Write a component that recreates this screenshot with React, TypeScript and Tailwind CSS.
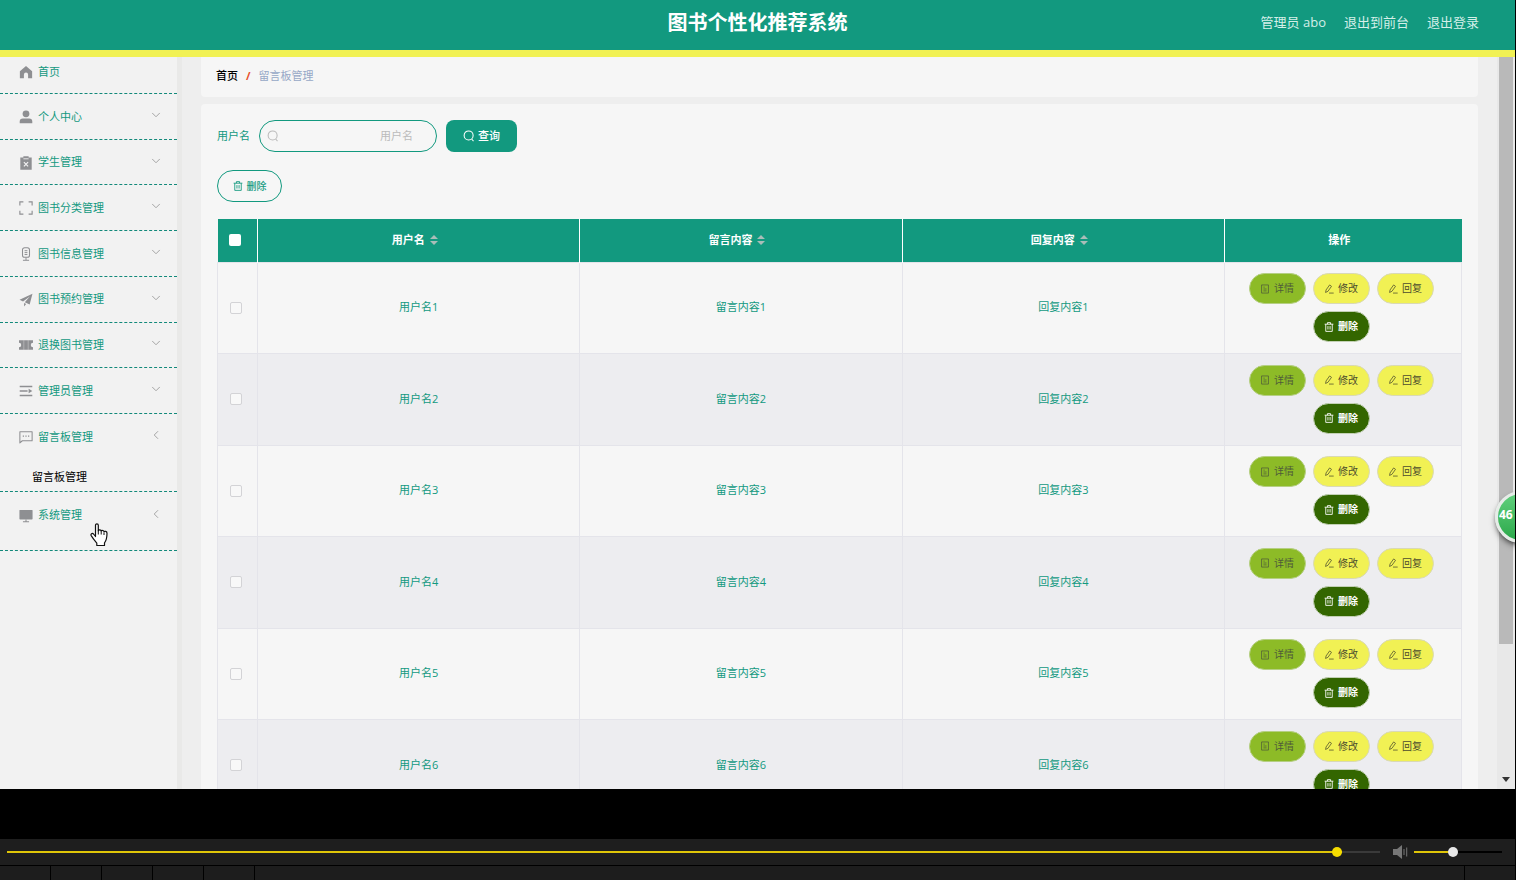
import { useState } from "react";
import type { ReactNode } from "react";
import { ChevronDown, ChevronLeft } from "lucide-react";

type IconProps = {
  children: ReactNode;
  className?: string;
};

type MenuEntry = {
  label: string;
  icon: ReactNode;
};

const Icon = ({ children, className = "size-3.5" }: IconProps) => (
  <svg viewBox="0 0 16 16" className={`shrink-0 ${className}`} fill="none" stroke="currentColor" aria-hidden="true">
    {children}
  </svg>
);

/* Menu icons */
const HomeIcon = (
  <Icon>
    <path d="M8 1 1 7.2V15h4.6v-4a2.4 2.4 0 0 1 4.8 0v4H15V7.2z" fill="currentColor" stroke="none" />
  </Icon>
);

const UserIcon = (
  <Icon>
    <circle cx="8" cy="4.4" r="3.9" fill="currentColor" stroke="none" />
    <path d="M.8 15.2v-2A3.6 3.6 0 0 1 4.4 9.6h7.2a3.6 3.6 0 0 1 3.6 3.6v2z" fill="currentColor" stroke="none" />
  </Icon>
);

const ReleaseIcon = (
  <Icon>
    <path d="M1.500 1.600H5V.4h6v1.200h3.500v14h-13z" fill="currentColor" stroke="none" />
    <path d="M5 3.200h6" stroke="#f2f2f2" strokeWidth="1" />
    <path d="m5.600 7 4.800 4.800m0-4.800-4.800 4.800" stroke="#f2f2f2" strokeWidth="1.400" />
  </Icon>
);

const ScreenIcon = (
  <Icon>
    <path d="M1 5V1h4M11 1h4v4M15 11v4h-4M5 15H1v-4" strokeWidth="1.300" />
  </Icon>
);

const MicIcon = (
  <Icon>
    <rect x="4" y=".8" width="8" height="11" rx="2.400" strokeWidth="1.200" />
    <path d="M8 12v3M4.500 15.200h7M6.400 4.200h3.200M6.400 6.400h3.200M6.400 8.600h3.200" strokeWidth="1.100" />
  </Icon>
);

const PlaneIcon = (
  <Icon>
    <path d="M15.400.8.6 7.600l4 2.100L12.400 4 6.600 10.700l5.600 2.500zM5.800 11.500v3.900l2.400-2.800z" fill="currentColor" stroke="none" />
  </Icon>
);

const TicketIcon = (
  <Icon>
    <path d="M0 2.500h16v3a2.500 2.500 0 0 0 0 5v3H0v-3a2.500 2.500 0 0 0 0-5z" fill="currentColor" stroke="none" />
    <path d="M5.500 2.500v11M10.500 2.500v11" stroke="#f2f2f2" strokeWidth=".4" />
  </Icon>
);

const OperationIcon = (
  <Icon>
    <path d="M.8 2.800h14.400M.8 8h9M.8 13.200h14.400" strokeWidth="1.800" />
    <path d="M11 5.500 15.200 8 11 10.500z" fill="currentColor" stroke="none" />
  </Icon>
);

const ChatIcon = (
  <Icon>
    <path d="M1 14.800V2h14v10.300H3.800z" strokeWidth="1.200" strokeLinejoin="round" />
    <path d="M4.300 7h1.400M7.300 7h1.400M10.300 7h1.400" strokeWidth="1.500" />
  </Icon>
);

const PlatformIcon = (
  <Icon>
    <rect x=".5" y="1" width="15" height="11" rx=".8" fill="currentColor" stroke="none" />
    <path d="M8 12v2.500M4.500 14.600h7" strokeWidth="1.200" />
  </Icon>
);

/* Button icons */
const SearchIcon = () => (
  <Icon className="size-3">
    <circle cx="7.500" cy="7.200" r="6" strokeWidth="1.400" />
    <path d="m11.500 12 2.500 2.700" strokeWidth="1.400" />
  </Icon>
);

const TrashIcon = (
  <Icon className="size-2.5">
    <path d="M1 3.500h14M5.500 3.500V1h5v2.500M2.800 3.500V15h10.400V3.500M6.300 6.500v5.500M9.700 6.500v5.500" strokeWidth="1.400" />
  </Icon>
);

const DocIcon = (
  <Icon className="size-2.5">
    <path d="M2.500 1.500h11v13h-11zM5.500 5h2M5.500 8h5M5.500 11h5" strokeWidth="1.200" />
  </Icon>
);

const EditIcon = (
  <Icon className="size-2.5">
    <path d="m2.500 13.500.8-4L9 1.500l3 2.200-5.700 8zM8 14.500h7.500" strokeWidth="1.200" />
  </Icon>
);

const menu: MenuEntry[] = [
  { label: "个人中心", icon: UserIcon },
  { label: "学生管理", icon: ReleaseIcon },
  { label: "图书分类管理", icon: ScreenIcon },
  { label: "图书信息管理", icon: MicIcon },
  { label: "图书预约管理", icon: PlaneIcon },
  { label: "退换图书管理", icon: TicketIcon },
  { label: "管理员管理", icon: OperationIcon },
];

const rows = [1, 2, 3, 4, 5, 6];

const columns = ["用户名", "留言内容", "回复内容"];

const MenuLabel = ({ label, icon }: MenuEntry) => (
  <span className="flex items-center gap-[5px]">
    <span className="text-[#8e8f92]">{icon}</span>
    {label}
  </span>
);

const Header = () => (
  <header className="grid h-[57px] shrink-0 grid-cols-[1fr_auto_1fr] items-center border-b-[7px] border-[#f1f154] bg-[#12997f] pb-1 text-white">
    <h1 className="col-start-2 text-xl font-bold">图书个性化推荐系统</h1>
    <div className="flex justify-end gap-[18px] pr-9 text-[13px] text-[#d5efe9]">
      <span>管理员 abo</span>
      <a href="#front">退出到前台</a>
      <a href="#logout">退出登录</a>
    </div>
  </header>
);

const Sidebar = () => (
  <nav className="w-[182px] shrink-0 border-r-[5px] border-[#e9e9e8] bg-[#f2f2f2] text-[11px] text-[#12997f]">
    <a href="#home" className="flex h-[37px] items-center border-b border-dashed border-[#12897a] pb-1.5 pl-[19px]">
      <MenuLabel label="首页" icon={HomeIcon} />
    </a>
    <div className="grid h-80 grid-rows-7">
      {menu.map((item) => (
        <button
          key={item.label}
          className="flex items-center justify-between border-b border-dashed border-[#12897a] pt-px pr-3.5 pl-[19px]"
        >
          <MenuLabel label={item.label} icon={item.icon} />
          <ChevronDown className="mb-1 size-3.5 text-[#999]" strokeWidth={1.5} />
        </button>
      ))}
    </div>
    <div className="border-b border-dashed border-[#12897a]">
      <button className="flex h-[46px] w-full items-center justify-between pr-3.5 pl-[19px]">
        <MenuLabel label="留言板管理" icon={ChatIcon} />
        <ChevronLeft className="mb-1 size-3.5 text-[#999]" strokeWidth={1.5} />
      </button>
      <a href="#board" className="flex h-[31px] items-center pt-[3px] pl-8 text-black">
        留言板管理
      </a>
    </div>
    <div className="h-[59px] border-b border-dashed border-[#12897a]">
      <button className="flex h-[46px] w-full items-center justify-between pt-px pr-3.5 pl-[19px]">
        <MenuLabel label="系统管理" icon={PlatformIcon} />
        <ChevronLeft className="mb-1 size-3.5 text-[#999]" strokeWidth={1.5} />
      </button>
    </div>
  </nav>
);

const RowActions = () => {
  const base = "flex h-[31px] w-[57px] items-center justify-center gap-1 rounded-full border text-[10px]";
  return (
    <div className="flex flex-wrap justify-center gap-[7px] pr-1">
      <button className={`${base} border-[#b5cf83] bg-[#8dbb27] text-[#4f5b3a]`}>{DocIcon}详情</button>
      <button className={`${base} border-[#d9d9b4] bg-[#f1f154] text-[#4c4c2e]`}>{EditIcon}修改</button>
      <button className={`${base} border-[#d9d9b4] bg-[#f1f154] text-[#4c4c2e]`}>{EditIcon}回复</button>
      <button className={`${base} border-[#c3d1b5] bg-[#336600] font-bold text-white`}>{TrashIcon}删除</button>
    </div>
  );
};

const MessageTable = () => (
  <table className="w-full table-fixed border-collapse text-center text-[11px] text-[#12997f]">
    <colgroup>
      <col className="w-10" />
      <col />
      <col />
      <col />
      <col className="w-[237px]" />
    </colgroup>
    <thead>
      <tr className="h-[43px] bg-[#12997f] text-white">
        <th className="border-r border-white pr-1">
          <input
            type="checkbox"
            aria-label="全选"
            className="mx-auto block size-3 appearance-none rounded-xs bg-white checked:bg-[#f1f154]"
          />
        </th>
        {columns.map((name) => (
          <th key={name} className="border-r border-white pr-2 font-bold">
            <span className="flex items-center justify-center gap-[5px]">
              {name}
              <svg viewBox="0 0 8 10" className="h-2.5 w-2" fill="#a9bdb8" aria-hidden="true">
                <path d="M0 4 4 0l4 4zM0 6l4 4 4-4z" />
              </svg>
            </span>
          </th>
        ))}
        <th className="pr-2 font-bold">操作</th>
      </tr>
    </thead>
    <tbody>
      {rows.map((n) => (
        <tr key={n} className="odd:h-[91px] even:h-[92px] even:bg-[#ededf0]">
          <td className="border border-[#e4e4ea] pr-1">
            <input
              type="checkbox"
              aria-label={`选择用户名${n}`}
              className="mx-auto block size-3 appearance-none rounded-xs border border-[#d3d3d6] bg-[#f8f8f8] checked:bg-[#12997f]"
            />
          </td>
          <td className="border border-[#e4e4ea]">用户名{n}</td>
          <td className="border border-[#e4e4ea]">留言内容{n}</td>
          <td className="border border-[#e4e4ea]">回复内容{n}</td>
          <td className="border border-[#e4e4ea]">
            <RowActions />
          </td>
        </tr>
      ))}
    </tbody>
  </table>
);

const Content = () => (
  <main className="flex min-w-0 flex-1 flex-col gap-[7px] bg-[#eeeeee] px-[19px] text-[11px]">
    {/* Breadcrumb */}
    <div className="flex h-10 shrink-0 items-center gap-2 rounded-b-sm bg-[#f6f6f6] px-[15px] pb-0.5">
      <a href="#home" className="font-medium text-black">
        首页
      </a>
      <span className="font-bold text-[#e8502c]">/</span>
      <span className="text-[#97a8c6]">留言板管理</span>
    </div>

    <div className="min-h-0 flex-1 overflow-hidden rounded-t-sm bg-[#f6f6f6] px-4 pt-4">
      {/* Search */}
      <form className="flex items-center gap-[9px]" onSubmit={(e) => e.preventDefault()}>
        <label htmlFor="username" className="text-[#12997f]">
          用户名
        </label>
        <div className="flex h-8 w-[178px] items-center rounded-full border border-[#12997f] pr-[23px] pl-[7px] text-[#bbb]">
          <SearchIcon />
          <input
            id="username"
            placeholder="用户名"
            className="min-w-0 flex-1 bg-transparent text-right text-[#12997f] outline-none placeholder:text-[#bbb]"
          />
        </div>
        <button className="flex h-8 w-[71px] items-center justify-center gap-[3px] rounded-lg bg-[#12997f] font-medium text-white">
          <SearchIcon />
          查询
        </button>
      </form>

      <button className="mt-[18px] mb-[17px] flex h-8 w-[65px] items-center justify-center gap-1 rounded-full border border-[#12997f] text-[10px] font-medium text-[#12997f]">
        {TrashIcon}
        删除
      </button>

      <MessageTable />
    </div>
  </main>
);

const Scrollbar = () => (
  <div className="flex w-[18px] shrink-0 flex-col items-center justify-between bg-[#e8e8e8] pb-[7px]">
    <div className="h-[81%] w-3.5 bg-[#b9b9b9]" />
    <svg viewBox="0 0 8 5" className="h-[5px] w-2" fill="#333" aria-hidden="true">
      <path d="M0 0h8L4 5z" />
    </svg>
  </div>
);

const HandCursor = () => (
  <svg viewBox="0 0 18 24" className="absolute top-[523px] left-[90px] h-6 w-[18px]" aria-hidden="true">
    <path
      d="M5.500 13.500V2.200C5.500.3 8.300.3 8.300 2.200v5.600c.4-1.300 2.800-1.100 2.900.4.500-1.200 2.700-.9 2.800.6.600-.9 3-.7 3 1.400 0 5.500-.8 7.500-2.500 9.600v2.700H6.800v-2.300C4.600 17.500 3 15.500 1.200 12.600c-.8-1.500 1-2.800 2.300-1.600z"
      fill="#fff"
      stroke="#111"
      strokeWidth="1.200"
      strokeLinejoin="round"
    />
    <path d="M8.300 7.500v4M11.200 8.500v3M14 9.500v2.500" stroke="#111" strokeWidth="1" />
  </svg>
);

const rangeStyle =
  "h-[2px] min-w-0 cursor-pointer appearance-none [&::-webkit-slider-thumb]:size-2.5 [&::-webkit-slider-thumb]:appearance-none [&::-webkit-slider-thumb]:rounded-full";

const Player = () => {
  const [progress, setProgress] = useState(972);
  const [volume, setVolume] = useState(44);

  return (
    <footer className="shrink-0 bg-black pt-[50px]">
      <div className="flex h-[26px] items-center bg-[#1e1e1e] pr-[13px] pl-[7px]">
        <input
          type="range"
          aria-label="播放进度"
          min={0}
          max={1000}
          value={progress}
          onChange={(e) => setProgress(Number(e.target.value))}
          className={`${rangeStyle} flex-1 [&::-webkit-slider-thumb]:bg-[#f5dc00]`}
          style={{ background: `linear-gradient(to right, #dfc508 ${progress / 10}%, #3a3a3a ${progress / 10}%)` }}
        />
        <svg viewBox="0 0 16 14" className="mr-[5px] ml-[13px] h-3.5 w-4 shrink-0" fill="#777" aria-hidden="true">
          <path d="M0 4h4l5-4v14l-5-4H0zM10.500 4h1v6h-1zM13.200 2.500h1v9h-1z" />
        </svg>
        <input
          type="range"
          aria-label="音量"
          value={volume}
          onChange={(e) => setVolume(Number(e.target.value))}
          className={`${rangeStyle} w-[88px] shrink-0 [&::-webkit-slider-thumb]:bg-[#e8e8e8]`}
          style={{ background: `linear-gradient(to right, #dfc508 ${volume}%, #000 ${volume}%)` }}
        />
      </div>
      <div className="mt-px flex h-3.5 bg-[#1d1d1d]">
        {[1, 2, 3, 4, 5].map((n) => (
          <div key={n} className="w-[51px] border-r border-black" />
        ))}
        <div className="ml-auto w-[51px] border-l border-black" />
      </div>
    </footer>
  );
};

const App = () => {
  return (
    <div className="flex h-screen flex-col bg-black pr-px font-['Open_Sans','Noto_Sans_CJK_SC',sans-serif]">
      <div className="relative flex min-h-0 flex-1 flex-col overflow-hidden">
        <Header />
        <div className="flex min-h-0 flex-1">
          <Sidebar />
          <Content />
          <Scrollbar />
        </div>

        {/* Floating counter */}
        <div className="absolute top-[491px] -right-8 flex size-[52px] items-center rounded-full border-[3px] border-[#e6ece8] bg-linear-to-b from-[#5fd07c] to-[#2aa84a] pb-1 pl-px font-['Open_Sans',sans-serif] text-xs font-bold text-white shadow-md shadow-black/50">
          46
        </div>
        <HandCursor />
      </div>
      <Player />
    </div>
  );
};

export default App;
